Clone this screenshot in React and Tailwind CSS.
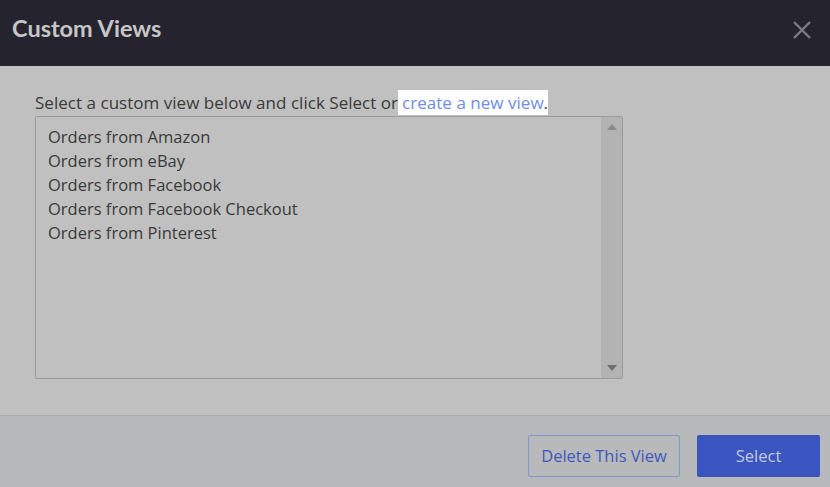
export default function App() {
    const views = ["Orders from Amazon", "Orders from eBay", "Orders from Facebook", "Orders from Facebook Checkout", "Orders from Pinterest"];
    return (
        <div className="w-[830px] h-[487px] overflow-hidden bg-[#c0c0c0] flex flex-col" style={{ fontFamily: "'Open Sans', sans-serif" }}>
            <div className="h-[66px] shrink-0 bg-[#25242e] flex justify-between pl-[12px] pr-[18px] pt-[14px]">
                <h1 className="text-[23.5px] leading-[28px] font-bold text-[#c6c6c8]" style={{ fontFamily: "Lato, sans-serif" }}>Custom Views</h1>
                <svg width="20" height="20" viewBox="0 0 20 20" className="text-[#7b7b82] mt-[6px]">
                    <path d="M2 2 L18 18 M18 2 L2 18" stroke="currentColor" strokeWidth="2.4" />
                </svg>
            </div>
            <div className="h-[349px] shrink-0 px-[35px] pt-[26px]">
                <p className="text-[17px] leading-[22px] text-[#3a3a3a] tracking-[0.03px]">
                    Select a custom view below and click Select or<span className="bg-white pl-[4px] py-[1px]"><a className="text-[#6f8de6]">create a new view</a>.</span>
                </p>
                <div className="mt-[2px] w-[588px] h-[263px] border border-[#9c9c9c] rounded-[2px] flex">
                    <ul className="flex-1 pt-[8px] pl-[12px] text-[16.5px] leading-[24px] text-[#3a3a3a]">
                        {views.map(v => <li key={v}>{v}</li>)}
                    </ul>
                    <div className="w-[21px] bg-[#b3b3b3] flex flex-col justify-between items-center py-[7px]">
                        <svg width="10" height="6" viewBox="0 0 10 6"><path d="M0 6 L5 0 L10 6 Z" fill="#8a8a8a" /></svg>
                        <svg width="10" height="6" viewBox="0 0 10 6"><path d="M0 0 L10 0 L5 6 Z" fill="#6e6e6e" /></svg>
                    </div>
                </div>
            </div>
            <div className="flex-1 bg-[#b8b9bb] border-t border-[#a9aaac] flex justify-end items-start gap-[17px] pt-[19px] pr-[10px]">
                <button className="w-[152px] h-[42px] border border-[#8596cc] rounded-[2px] text-[16.5px] text-[#4058bd]">Delete This View</button>
                <button className="w-[123px] h-[42px] bg-[#3a55bf] rounded-[2px] text-[16.5px] text-[#c4c8dc]">Select</button>
            </div>
        </div>
    )
}
